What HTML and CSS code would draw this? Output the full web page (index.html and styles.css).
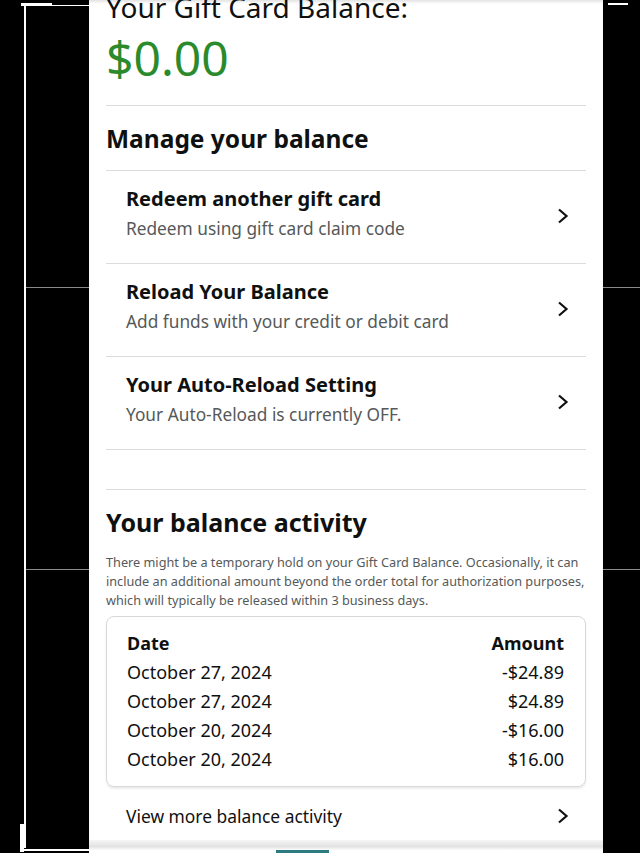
FILE: index.html
```html
<!DOCTYPE html>
<html lang="en">
<head>
<meta charset="utf-8">
<title>Gift Card Balance</title>
<link rel="stylesheet" href="styles.css">
</head>
<body>
<main class="panel">
  <section class="balance">
    <h1 class="balance-label">Your Gift Card Balance:</h1>
    <div class="balance-amount">$0.00</div>
  </section>

  <section class="manage">
    <h2 class="section-title">Manage your balance</h2>
  </section>

  <ul class="menu">
    <li class="menu-row">
      <div class="menu-text">
        <div class="menu-title">Redeem another gift card</div>
        <div class="menu-sub">Redeem using gift card claim code</div>
      </div>
      <svg class="chev" width="12" height="16" viewBox="0 0 12 16"><polyline points="2,1.5 9.5,8 2,14.5" fill="none" stroke="#0f1111" stroke-width="2.2"/></svg>
    </li>
    <li class="menu-row">
      <div class="menu-text">
        <div class="menu-title">Reload Your Balance</div>
        <div class="menu-sub">Add funds with your credit or debit card</div>
      </div>
      <svg class="chev" width="12" height="16" viewBox="0 0 12 16"><polyline points="2,1.5 9.5,8 2,14.5" fill="none" stroke="#0f1111" stroke-width="2.2"/></svg>
    </li>
    <li class="menu-row">
      <div class="menu-text">
        <div class="menu-title">Your Auto-Reload Setting</div>
        <div class="menu-sub">Your Auto-Reload is currently OFF.</div>
      </div>
      <svg class="chev" width="12" height="16" viewBox="0 0 12 16"><polyline points="2,1.5 9.5,8 2,14.5" fill="none" stroke="#0f1111" stroke-width="2.2"/></svg>
    </li>
  </ul>

  <section class="activity">
    <h2 class="activity-title">Your balance activity</h2>
    <p class="activity-note">There might be a temporary hold on your Gift Card Balance. Occasionally, it can include an additional amount beyond the order total for authorization purposes, which will typically be released within 3 business days.</p>
    <div class="activity-table">
      <div class="t-row t-head"><span>Date</span><span>Amount</span></div>
      <div class="t-row"><span>October 27, 2024</span><span>-$24.89</span></div>
      <div class="t-row"><span>October 27, 2024</span><span>$24.89</span></div>
      <div class="t-row"><span>October 20, 2024</span><span>-$16.00</span></div>
      <div class="t-row"><span>October 20, 2024</span><span>$16.00</span></div>
    </div>
    <div class="more-row">
      <span>View more balance activity</span>
      <svg class="chev" width="12" height="16" viewBox="0 0 12 16"><polyline points="2,1.5 9.5,8 2,14.5" fill="none" stroke="#0f1111" stroke-width="2.2"/></svg>
    </div>
  </section>
  <div class="panel-foot"><div class="foot-tab"></div></div>
</main>
</body>
</html>
```
FILE: styles.css
```css
* { box-sizing: border-box; }
html, body { height: 100%; }
body {
  margin: 0;
  overflow: hidden;
  font-family: "Noto Sans", "Open Sans", sans-serif;
  color: #0f1111;
  background-color: #000;
  background-image:
    linear-gradient(#fff, #fff),
    linear-gradient(#fff, #fff),
    linear-gradient(#fff, #fff),
    linear-gradient(#fff, #fff),
    linear-gradient(#8a8a8a, #8a8a8a),
    linear-gradient(#8a8a8a, #8a8a8a),
    linear-gradient(#8a8a8a, #8a8a8a),
    linear-gradient(#8a8a8a, #8a8a8a),
    linear-gradient(#fff, #fff),
    linear-gradient(#fff, #fff);
  background-repeat: no-repeat;
  background-size:
    2px 845px,
    31px 3px,
    64px 1px,
    20px 2px,
    64px 1px,
    37px 1px,
    64px 1px,
    37px 1px,
    4px 28px,
    68px 2px;
  background-position:
    24px 3px,
    21px 3px,
    25px 5px,
    608px 3px,
    25px 287px,
    603px 287px,
    25px 569px,
    603px 569px,
    20px 824px,
    21px 849px;
}

.panel {
  width: 514px;
  height: 853px;
  margin-left: 89px;
  background: #fff;
  padding: 0 17px;
  display: flex;
  flex-direction: column;
  box-shadow: inset 0 3px 3px -1px #e4e4e4;
}

.balance {
  height: 106px;
  border-bottom: 1px solid #dcdcdc;
}
.balance-label {
  margin: -10px 0 0;
  font-size: 28px;
  line-height: 34px;
  font-weight: 400;
}
.balance-amount {
  margin-top: 6px;
  font-size: 48px;
  line-height: 56px;
  color: #2b8a2b;
}

.manage {
  height: 65px;
  padding-top: 18px;
  border-bottom: 1px solid #dcdcdc;
}
.section-title {
  margin: 0;
  font-size: 24.5px;
  line-height: 30px;
  font-weight: 700;
}

.menu {
  list-style: none;
  margin: 0;
  padding: 0;
}
.menu-row {
  height: 93px;
  padding: 15px 17px 0 20px;
  border-bottom: 1px solid #dcdcdc;
  display: flex;
  align-items: flex-start;
  justify-content: space-between;
}
.menu-title {
  font-size: 20px;
  line-height: 26px;
  font-weight: 700;
}
.menu-sub {
  margin-top: 5px;
  font-size: 17.3px;
  line-height: 24px;
  color: #565959;
}
.chev { flex: none; }
.menu-row .chev { margin-top: 22px; }

.activity {
  margin-top: 39px;
  border-top: 1px solid #dcdcdc;
  padding-top: 16px;
}
.activity-title {
  margin: 0;
  font-size: 25px;
  line-height: 32px;
  font-weight: 700;
}
.activity-note {
  margin: 15px 0 0;
  font-size: 12.7px;
  line-height: 19px;
  color: #565959;
}
.activity-table {
  margin-top: 6px;
  border: 1px solid #d5d9d9;
  border-radius: 8px;
  padding: 12px 21px 12px 20px;
  box-shadow: 0 2px 2px rgba(0,0,0,0.08);
}
.t-row {
  display: flex;
  justify-content: space-between;
  font-size: 18px;
  line-height: 29px;
}
.t-head { font-weight: 700; }

.more-row {
  display: flex;
  justify-content: space-between;
  align-items: center;
  padding: 17px 17px 0 20px;
  font-size: 17.4px;
  line-height: 24px;
}

.panel-foot {
  margin: auto -17px 0;
  height: 13px;
  background: linear-gradient(#f6f6f6, #e2e2e2 50%, #fff 80%);
  display: flex;
  align-items: flex-end;
}
.foot-tab {
  margin-left: 187px;
  width: 53px;
  height: 3px;
  background: #2b7b80;
}
```
